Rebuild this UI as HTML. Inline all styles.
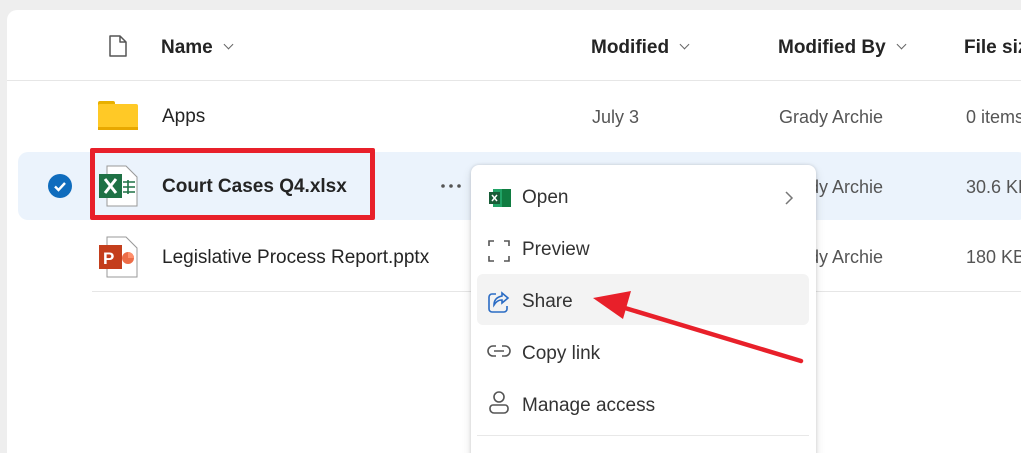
<!DOCTYPE html>
<html><head><meta charset="utf-8"><style>
*{margin:0;padding:0;box-sizing:border-box}
html,body{width:1021px;height:453px;overflow:hidden}
body{background:#eeeeee;font-family:"Liberation Sans",sans-serif;position:relative;color:#242424}
.card{position:absolute;left:7px;top:10px;width:1030px;height:460px;background:#fff;border-radius:10px}
.t{position:absolute;white-space:nowrap}
.h{font-size:19px;font-weight:bold;color:#242424}
.r{font-size:18px;color:#555}
.n{font-size:18px;color:#242424}
.line{position:absolute;height:1px;background:#e6e6e6}
.menu{position:absolute;left:471px;top:165px;width:345px;height:300px;background:#fff;border-radius:8px;box-shadow:0 0 3px rgba(0,0,0,.15),0 4px 10px rgba(0,0,0,.12)}
.mi{position:absolute;left:51px;font-size:19px;color:#333}
.chev{display:inline-block;width:7px;height:7px;border-right:1.5px solid #666;border-bottom:1.5px solid #666;transform:rotate(45deg);margin-left:12px;vertical-align:5px}
</style></head><body>
<div class="card"></div>
<svg class="t" style="left:108px;top:34px" width="20" height="24" viewBox="0 0 20 24"><path d="M2 2h10l6 6v14H2z M12 2v6h6" fill="none" stroke="#555" stroke-width="1.5" stroke-linejoin="round"/></svg>
<div class="t h" style="left:161px;top:37px">Name<span class="chev"></span></div>
<div class="t h" style="left:591px;top:37px">Modified<span class="chev"></span></div>
<div class="t h" style="left:778px;top:37px">Modified By<span class="chev"></span></div>
<div class="t h" style="left:964px;top:37px">File size</div>
<div class="line" style="left:7px;top:80px;width:1014px"></div>
<svg class="t" style="left:98px;top:100px" width="42" height="31"><rect x="0" y="1" width="17" height="8" rx="2" fill="#e8b000"/><rect x="0" y="4" width="40" height="26" rx="2" fill="#ffc926"/><rect x="0" y="27" width="40" height="3" fill="#e8a800"/></svg>
<div class="t n" style="left:162px;top:106px;font-size:19px">Apps</div>
<div class="t r" style="left:592px;top:107px">July 3</div>
<div class="t r" style="left:779px;top:107px">Grady Archie</div>
<div class="t r" style="left:966px;top:107px">0 items</div>
<div style="position:absolute;left:18px;top:152px;width:1010px;height:68px;background:#ebf3fc;border-radius:10px"></div>
<svg class="t" style="left:48px;top:174px" width="24" height="24"><circle cx="12" cy="12" r="12" fill="#0f6cbd"/><path d="M7 12.5l3.5 3.5L17 9" fill="none" stroke="#fff" stroke-width="2.4"/></svg>
<div style="position:absolute;left:90px;top:148px;width:285px;height:72px;border:5px solid #e8202a;border-radius:2px"></div>
<svg class="t" style="left:99px;top:165px" width="40" height="42"><path d="M8 1h19l11 11v29H8z" fill="#fff" stroke="#999"/><rect x="0" y="9" width="23" height="24" fill="#1e7145"/><path d="M6 14l11 14M17 14L6 28" stroke="#fff" stroke-width="3"/><path d="M24 17h12M24 22h12M24 27h12M29 15v14" stroke="#1e7145" stroke-width="1.6"/></svg>
<div class="t n" style="left:162px;top:176px;font-size:19px;font-weight:bold">Court Cases Q4.xlsx</div>
<svg class="t" style="left:440px;top:183px" width="22" height="6" fill="#555"><circle cx="3" cy="3" r="1.8"/><circle cx="11" cy="3" r="1.8"/><circle cx="19" cy="3" r="1.8"/></svg>
<div class="t r" style="left:779px;top:177px">Grady Archie</div>
<div class="t r" style="left:966px;top:177px">30.6 KB</div>
<svg class="t" style="left:99px;top:236px" width="40" height="42"><path d="M8 1h19l11 11v29H8z" fill="#fff" stroke="#999"/><rect x="0" y="9" width="23" height="24" fill="#c43e1c"/><text x="4" y="28" font-family="Liberation Sans" font-size="17" fill="#fff" font-weight="bold">P</text><circle cx="29" cy="22" r="6" fill="#ed6c47"/><path d="M29 16v6h6a6 6 0 0 0-6-6z" fill="#ff8f6b"/></svg>
<div class="t n" style="left:162px;top:247px;font-size:19px">Legislative Process Report.pptx</div>
<div class="t r" style="left:779px;top:247px">Grady Archie</div>
<div class="t r" style="left:966px;top:247px">180 KB</div>
<div class="line" style="left:92px;top:291px;width:929px"></div>
<div class="menu">
<svg class="t" style="left:18px;top:24px" width="22" height="18"><rect x="4" y="0" width="18" height="18" fill="#21a366"/><rect x="13" y="0" width="9" height="18" fill="#107c41"/><rect x="0" y="3" width="11" height="12" fill="#185c37"/><path d="M3 6l5 6M8 6l-5 6" stroke="#fff" stroke-width="1.5"/></svg>
<div class="mi" style="top:22px">Open</div>
<svg class="t" style="left:313px;top:25px" width="10" height="16" fill="none" stroke="#777" stroke-width="1.5"><path d="M2 2l6 6-6 6"/></svg>
<svg class="t" style="left:17px;top:75px" width="22" height="22" fill="none" stroke="#555" stroke-width="1.6"><path d="M1 6V1h5M16 1h5v5M21 16v5h-5M6 21H1v-5"/></svg>
<div class="mi" style="top:74px">Preview</div>
<div style="position:absolute;left:6px;top:109px;width:332px;height:51px;background:#f3f3f3;border-radius:6px"></div>
<svg class="t" style="left:17px;top:126px" width="22" height="22" fill="none" stroke="#2b6cc4" stroke-width="1.6"><path d="M8 3H4a3 3 0 0 0-3 3v12a3 3 0 0 0 3 3h12a3 3 0 0 0 3-3v-3"/><path d="M14 2l6 5-6 5v-3c-4 0-6 2-8 5 0-5 3-8 8-9z"/></svg>
<div class="mi" style="top:126px">Share</div>
<svg class="t" style="left:16px;top:180px" width="24" height="14" fill="none" stroke="#555" stroke-width="1.6"><path d="M9 1H6a5 5 0 0 0 0 10h3M15 1h3a5 5 0 0 1 0 10h-3M7 6h10"/></svg>
<div class="mi" style="top:178px">Copy link</div>
<svg class="t" style="left:17px;top:226px" width="22" height="24" fill="none" stroke="#555" stroke-width="1.6"><circle cx="11" cy="6" r="5"/><path d="M2 17a3 3 0 0 1 3-3h12a3 3 0 0 1 3 3v1a4 4 0 0 1-4 4H6a4 4 0 0 1-4-4z"/></svg>
<div class="mi" style="top:230px">Manage access</div>
<div class="line" style="left:6px;top:270px;width:332px;background:#e8e8e8"></div>
</div>
<svg style="position:absolute;left:0;top:0" width="1021" height="453"><line x1="801" y1="361" x2="625" y2="308" stroke="#e8202a" stroke-width="4.5" stroke-linecap="round"/><path d="M593 298l38-7-8 28z" fill="#e8202a"/></svg>
</body></html>
